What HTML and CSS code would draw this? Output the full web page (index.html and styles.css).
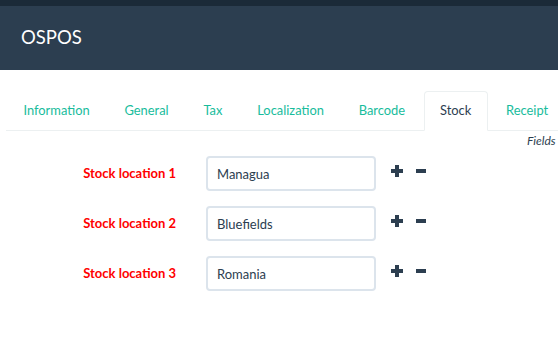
FILE: index.html
```html
<!DOCTYPE html>
<html lang="en">
<head>
    <meta charset="UTF-8">
    <meta name="viewport" content="width=device-width, initial-scale=1.0">
    <title>OSPOS - Stock</title>
    <link rel="stylesheet" href="styles.css">
</head>
<body>

    <!-- Top bar -->
    <div class="topbar"></div>

    <!-- Navbar -->
    <header class="navbar">
        <span class="brand">OSPOS</span>
    </header>

    <!-- Config tabs -->
    <ul class="tabs">
        <li><a href="#">Information</a></li>
        <li><a href="#">General</a></li>
        <li><a href="#">Tax</a></li>
        <li><a href="#">Localization</a></li>
        <li><a href="#">Barcode</a></li>
        <li class="active"><a href="#">Stock</a></li>
        <li><a href="#">Receipt</a></li>
    </ul>

    <div class="required-note">Fields in red are required</div>

    <!-- Stock locations -->
    <form class="locations">
        <div class="row">
            <label class="control-label">Stock location 1</label>
            <input class="form-control" type="text" value="Managua">
            <span class="icons">
                <svg class="plus" width="12" height="12" viewBox="0 0 12 12"><path d="M4 0h4v4h4v4H8v4H4V8H0V4h4z"/></svg>
                <svg class="minus" width="10" height="4" viewBox="0 0 10 4"><path d="M0 0h10v4H0z"/></svg>
            </span>
        </div>
        <div class="row">
            <label class="control-label">Stock location 2</label>
            <input class="form-control" type="text" value="Bluefields">
            <span class="icons">
                <svg class="plus" width="12" height="12" viewBox="0 0 12 12"><path d="M4 0h4v4h4v4H8v4H4V8H0V4h4z"/></svg>
                <svg class="minus" width="10" height="4" viewBox="0 0 10 4"><path d="M0 0h10v4H0z"/></svg>
            </span>
        </div>
        <div class="row">
            <label class="control-label">Stock location 3</label>
            <input class="form-control" type="text" value="Romania">
            <span class="icons">
                <svg class="plus" width="12" height="12" viewBox="0 0 12 12"><path d="M4 0h4v4h4v4H8v4H4V8H0V4h4z"/></svg>
                <svg class="minus" width="10" height="4" viewBox="0 0 10 4"><path d="M0 0h10v4H0z"/></svg>
            </span>
        </div>
    </form>

</body>
</html>
```

FILE: styles.css
```css
* {
    margin: 0;
    padding: 0;
    box-sizing: border-box;
}

body {
    font-family: Lato, "Open Sans", sans-serif;
    font-size: 13px;
    color: #2c3e50;
    background: #fff;
    overflow: hidden;
}

.topbar {
    height: 6px;
    background-color: #1b2a38;
}

.navbar {
    height: 64px;
    background-color: #2c3e50;
    padding-left: 21px;
    display: flex;
    align-items: center;
}

.brand {
    color: #fff;
    font-size: 18.5px;
    line-height: 1;
    margin-top: -2px;
}

.tabs {
    list-style: none;
    display: flex;
    margin: 21px 0 0 6px;
    padding-left: 1px;
    border-bottom: 1px solid #ecf0f1;
    white-space: nowrap;
}

.tabs li {
    margin-right: 2px;
    margin-bottom: -1px;
}

.tabs a {
    display: block;
    padding: 8px 15.4px 9px;
    line-height: 21px;
    font-size: 12.9px;
    color: #18bc9c;
    text-decoration: none;
    border: 1px solid transparent;
    border-radius: 4px 4px 0 0;
}

.tabs .active a {
    color: #2c3e50;
    background: #fff;
    border-color: #ecf0f1;
    border-bottom-color: #fff;
}

.required-note {
    margin-left: 527px;
    white-space: nowrap;
    font-size: 12px;
    font-style: italic;
    line-height: 20px;
}

.locations {
    margin-top: 5px;
}

.row {
    display: flex;
    align-items: center;
    height: 35px;
    margin-bottom: 15px;
}

.control-label {
    width: 176px;
    text-align: right;
    color: #ff0000;
    font-weight: bold;
    padding-bottom: 2px;
}

.form-control {
    margin-left: 30px;
    width: 170px;
    height: 35px;
    padding: 0 9px;
    border: 2px solid #dce4ec;
    border-radius: 4px;
    font-family: Lato, "Open Sans", sans-serif;
    font-size: 13px;
    color: #2c3e50;
    outline: none;
}

.icons {
    display: flex;
    align-items: center;
    margin-left: 15px;
    margin-top: -6px;
}

.icons svg {
    fill: #2c3e50;
}

.minus {
    margin-left: 13px;
}
```
